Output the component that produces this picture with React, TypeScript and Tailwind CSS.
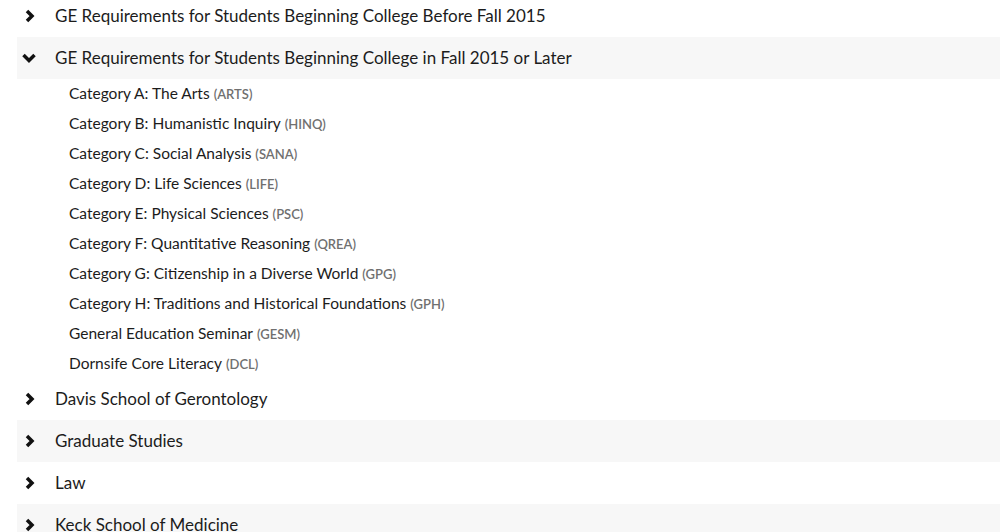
const sections = [
  { title: 'GE Requirements for Students Beginning College Before Fall 2015', open: false },
  { title: 'GE Requirements for Students Beginning College in Fall 2015 or Later', open: true },
  { title: 'Davis School of Gerontology', open: false },
  { title: 'Graduate Studies', open: false },
  { title: 'Law', open: false },
  { title: 'Keck School of Medicine', open: false },
];

const categories = [
  { name: 'Category A: The Arts', code: 'ARTS' },
  { name: 'Category B: Humanistic Inquiry', code: 'HINQ' },
  { name: 'Category C: Social Analysis', code: 'SANA' },
  { name: 'Category D: Life Sciences', code: 'LIFE' },
  { name: 'Category E: Physical Sciences', code: 'PSC' },
  { name: 'Category F: Quantitative Reasoning', code: 'QREA' },
  { name: 'Category G: Citizenship in a Diverse World', code: 'GPG' },
  { name: 'Category H: Traditions and Historical Foundations', code: 'GPH' },
  { name: 'General Education Seminar', code: 'GESM' },
  { name: 'Dornsife Core Literacy', code: 'DCL' },
];

function Chevron({ open }: { open: boolean }) {
  return (
    <svg width="14" height="14" viewBox="0 0 14 14" className="ml-[5px] mr-[19px] shrink-0">
      <path
        d={open ? 'M1.5 4 L7 9.5 L12.5 4' : 'M5 2 L10 7 L5 12'}
        fill="none"
        stroke="#111"
        strokeWidth="3.5"
        strokeLinejoin="miter"
      />
    </svg>
  );
}

export default function App() {
  return (
    <div
      className="w-[1000px] h-[532px] overflow-hidden bg-white pl-[17px] text-[#1c1c1c]"
      style={{ fontFamily: 'Lato, "Open Sans", sans-serif' }}
    >
      <ul className="-mt-[5px]">
        {sections.map((s, i) => (
          <li key={s.title}>
            <div
              className={`flex h-[42px] items-center ${i % 2 === 1 ? 'bg-[#f7f7f7]' : ''}`}
            >
              <Chevron open={s.open} />
              <span className="text-[17px]">{s.title}</span>
            </div>
            {s.open && (
              <ul className="-mt-[1px] pl-[52px]">
                {categories.map((c) => (
                  <li key={c.code} className="h-[30px] text-[15.5px] leading-[30px]">
                    {c.name}
                    <span className="ml-[4px] text-[13px] font-semibold text-[#707070]">
                      ({c.code})
                    </span>
                  </li>
                ))}
              </ul>
            )}
          </li>
        ))}
      </ul>
    </div>
  );
}
